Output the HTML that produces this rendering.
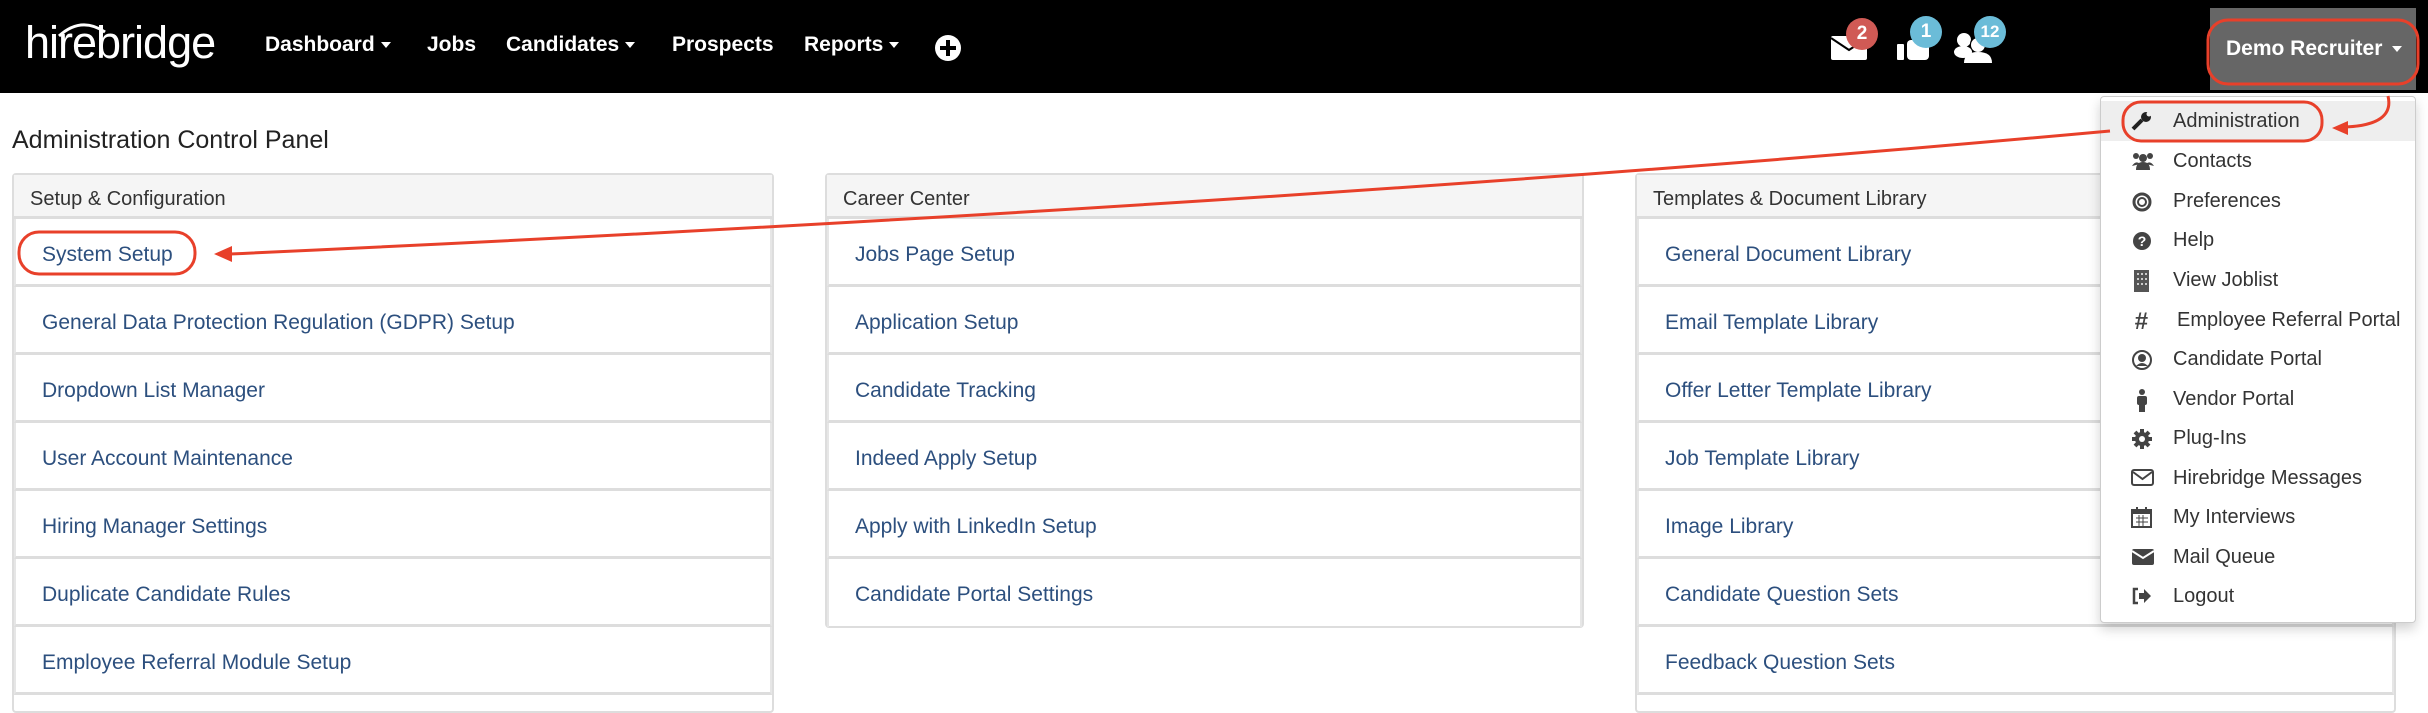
<!DOCTYPE html>
<html><head><meta charset="utf-8"><style>
*{margin:0;padding:0;box-sizing:border-box}
body{width:2428px;height:688px;overflow:hidden;background:#fff;font-family:"Liberation Sans",sans-serif;position:relative}
.nav{position:absolute;left:0;top:0;width:2428px;height:93px;background:#000}
.logo{position:absolute;left:25px;top:17px;color:#fff;font-size:45px;letter-spacing:-1px}
.ni{position:absolute;top:33px;color:#fff;font-size:21px;font-weight:bold}
.car{display:inline-block;width:0;height:0;border-left:5px solid transparent;border-right:5px solid transparent;border-top:6px solid #fff;margin-left:6px;vertical-align:middle}
.badge{position:absolute;width:32px;height:32px;border-radius:50%;color:#fff;font-weight:bold;font-size:19px;text-align:center;line-height:32px}
.demo{position:absolute;left:2210px;top:8px;width:206px;height:82px;background:#666;color:#fff;font-size:21px;font-weight:bold;line-height:82px;padding-left:16px}
h1{position:absolute;left:12px;top:126px;font-weight:normal;font-size:25px;color:#222}
.panel{position:absolute;top:173px;border:2px solid #ddd;border-radius:4px;background:#fff}
.ph{height:44px;background:#f5f5f5;border-bottom:3px solid #ddd;font-size:20px;color:#333;padding:13px 16px}
.row{height:68px;border-bottom:3px solid #ddd;border-left:2px solid #e6e6e6;border-right:2px solid #e6e6e6;font-size:21px;color:#2c4f7e;padding:24px 0 0 26px}
.dd{position:absolute;left:2100px;top:96px;width:316px;height:527px;background:#fff;border:1px solid #ccc;border-radius:4px;box-shadow:0 6px 12px rgba(0,0,0,.18)}
.di{position:absolute;left:0;width:314px;height:40px;font-size:20px;color:#333;line-height:40px;padding-left:72px}
.di svg{position:absolute;left:30px;top:10px}
</style></head><body>
<div class="nav">
<div class="logo">hirebridge</div>
<svg style="position:absolute;left:55px;top:16px" width="56" height="24"><path d="M4 20 Q26 0 50 16" stroke="#fff" stroke-width="3" fill="none"/></svg>
<div class="ni" style="left:265px">Dashboard<span class="car"></span></div>
<div class="ni" style="left:427px">Jobs</div>
<div class="ni" style="left:506px">Candidates<span class="car"></span></div>
<div class="ni" style="left:672px">Prospects</div>
<div class="ni" style="left:804px">Reports<span class="car"></span></div>
<div style="position:absolute;left:935px;top:35px;width:26px;height:26px;border-radius:50%;background:#fff"></div>
<div style="position:absolute;left:946px;top:40px;width:4px;height:16px;background:#000"></div>
<div style="position:absolute;left:940px;top:46px;width:16px;height:4px;background:#000"></div>
<svg style="position:absolute;left:1830px;top:30px" width="190" height="34">
<rect x="1" y="6" width="36" height="24" rx="2" fill="#fff"/><path d="M1 8 L19 20 L37 8" stroke="#000" stroke-width="2" fill="none"/>
<rect x="67" y="14" width="7" height="16" rx="1" fill="#fff"/><rect x="77" y="10" width="22" height="20" rx="4" fill="#fff"/>
<circle cx="134" cy="10" r="7" fill="#fff"/><ellipse cx="133" cy="22" rx="9" ry="6" fill="#fff"/><circle cx="148" cy="14" r="8" fill="#000"/><circle cx="148" cy="15" r="7" fill="#fff"/><path d="M134 33 Q134 22 148 22 Q162 22 162 33 Z" fill="#fff"/>
</svg>
<div class="badge" style="left:1846px;top:18px;background:#d05a55">2</div>
<div class="badge" style="left:1910px;top:16px;background:#6bbcd8">1</div>
<div class="badge" style="left:1974px;top:16px;background:#6bbcd8;font-size:17px">12</div>
<div class="demo">Demo Recruiter<span class="car" style="margin-left:10px"></span></div>
</div>
<h1>Administration Control Panel</h1>
<div class="panel" style="left:12px;width:762px;height:540px"><div class="ph">Setup &amp; Configuration</div>
<div class="row">System Setup</div><div class="row">General Data Protection Regulation (GDPR) Setup</div><div class="row">Dropdown List Manager</div><div class="row">User Account Maintenance</div><div class="row">Hiring Manager Settings</div><div class="row">Duplicate Candidate Rules</div><div class="row">Employee Referral Module Setup</div></div>
<div class="panel" style="left:825px;width:759px;height:455px"><div class="ph">Career Center</div>
<div class="row">Jobs Page Setup</div><div class="row">Application Setup</div><div class="row">Candidate Tracking</div><div class="row">Indeed Apply Setup</div><div class="row">Apply with LinkedIn Setup</div><div class="row" style="border-bottom:none">Candidate Portal Settings</div></div>
<div class="panel" style="left:1635px;width:761px;height:540px"><div class="ph">Templates &amp; Document Library</div>
<div class="row">General Document Library</div><div class="row">Email Template Library</div><div class="row">Offer Letter Template Library</div><div class="row">Job Template Library</div><div class="row">Image Library</div><div class="row">Candidate Question Sets</div><div class="row">Feedback Question Sets</div></div>
<div class="dd">
<div class="di" style="top:4px;background:#eee">Administration<svg width="22" height="20"><path d="M2 18 L11 9" stroke="#222" stroke-width="4"/><circle cx="15" cy="6" r="5" fill="#222"/><circle cx="18" cy="3" r="2.5" fill="#eee"/></svg></div>
<div class="di" style="top:44px">Contacts<svg width="24" height="20"><circle cx="5" cy="5" r="3" fill="#444"/><circle cx="19" cy="5" r="3" fill="#444"/><circle cx="12" cy="7" r="4" fill="#444"/><path d="M1 15 Q5 9 9 13 M15 13 Q19 9 23 15" fill="#444"/><path d="M5 19 Q5 11 12 11 Q19 11 19 19 Z" fill="#444"/></svg></div>
<div class="di" style="top:84px">Preferences<svg width="22" height="22"><circle cx="11" cy="11" r="8" stroke="#444" stroke-width="3" fill="none"/><circle cx="11" cy="11" r="4" stroke="#444" stroke-width="2" fill="none"/></svg></div>
<div class="di" style="top:123px">Help<svg width="22" height="22"><circle cx="11" cy="11" r="9" fill="#444"/><text x="11" y="16" fill="#fff" font-size="14" font-weight="bold" text-anchor="middle" font-family="Liberation Sans">?</text></svg></div>
<div class="di" style="top:163px">View Joblist<svg width="22" height="24"><rect x="3" y="0" width="15" height="22" fill="#555"/><g fill="#ccc"><rect x="6" y="3" width="2" height="2"/><rect x="10" y="3" width="2" height="2"/><rect x="14" y="3" width="2" height="2"/><rect x="6" y="8" width="2" height="2"/><rect x="10" y="8" width="2" height="2"/><rect x="14" y="8" width="2" height="2"/><rect x="6" y="13" width="2" height="2"/><rect x="10" y="13" width="2" height="2"/><rect x="14" y="13" width="2" height="2"/></g></svg></div>
<div class="di" style="top:203px;padding-left:76px">Employee Referral Portal<svg width="22" height="22"><text x="10" y="19" fill="#444" font-size="24" font-weight="bold" text-anchor="middle" font-family="Liberation Sans" font-style="italic">#</text></svg></div>
<div class="di" style="top:242px">Candidate Portal<svg width="22" height="22"><circle cx="11" cy="11" r="9" stroke="#444" stroke-width="2" fill="none"/><circle cx="11" cy="9" r="4" fill="#444"/><path d="M5 17 Q11 11 17 17" fill="#444"/></svg></div>
<div class="di" style="top:282px">Vendor Portal<svg width="22" height="24"><circle cx="11" cy="3" r="3" fill="#444"/><rect x="6" y="7" width="10" height="9" rx="2" fill="#444"/><rect x="8" y="14" width="6" height="9" fill="#444"/></svg></div>
<div class="di" style="top:321px">Plug-Ins<svg width="22" height="22"><circle cx="11" cy="11" r="7" fill="#444"/><g stroke="#444" stroke-width="4"><path d="M11 1 V21 M1 11 H21 M4 4 L18 18 M18 4 L4 18"/></g><circle cx="11" cy="11" r="3" fill="#fff"/></svg></div>
<div class="di" style="top:361px">Hirebridge Messages<svg width="24" height="20"><rect x="1" y="2" width="21" height="15" rx="2" stroke="#444" stroke-width="2" fill="none"/><path d="M2 4 L11.5 11 L21 4" stroke="#444" stroke-width="2" fill="none"/></svg></div>
<div class="di" style="top:400px">My Interviews<svg width="22" height="22"><rect x="1" y="3" width="19" height="17" stroke="#444" stroke-width="2" fill="none"/><rect x="1" y="3" width="19" height="4" fill="#444"/><path d="M5 11H17M5 15H17M8 8V20M12 8V20" stroke="#444"/><path d="M6 0V5M15 0V5" stroke="#444" stroke-width="2"/></svg></div>
<div class="di" style="top:440px">Mail Queue<svg width="24" height="20"><rect x="1" y="2" width="22" height="16" rx="2" fill="#444"/><path d="M1 4 L12 11 L23 4" stroke="#fff" stroke-width="2" fill="none"/></svg></div>
<div class="di" style="top:479px">Logout<svg width="22" height="20"><path d="M7 3 H3 V17 H7" stroke="#444" stroke-width="2.5" fill="none"/><path d="M8 7 H13 V3 L20 10 L13 17 V13 H8 Z" fill="#444"/></svg></div>
</div>
<svg style="position:absolute;left:0;top:0" width="2428" height="688">
<g stroke="#e8402a" stroke-width="3" fill="none">
<rect x="19" y="232" width="176" height="42" rx="20"/>
<rect x="2123" y="102" width="199" height="39" rx="18"/>
<rect x="2208" y="20" width="210" height="64" rx="20"/>
<path d="M2110 131 Q1300 205 230 254"/>
<path d="M2388 96 Q2395 125 2345 127"/>
</g>
<path d="M214 254 L232 246 L232 262 Z" fill="#e8402a"/>
<path d="M2332 128 L2348 121 L2348 135 Z" fill="#e8402a"/>
</svg>
</body></html>
